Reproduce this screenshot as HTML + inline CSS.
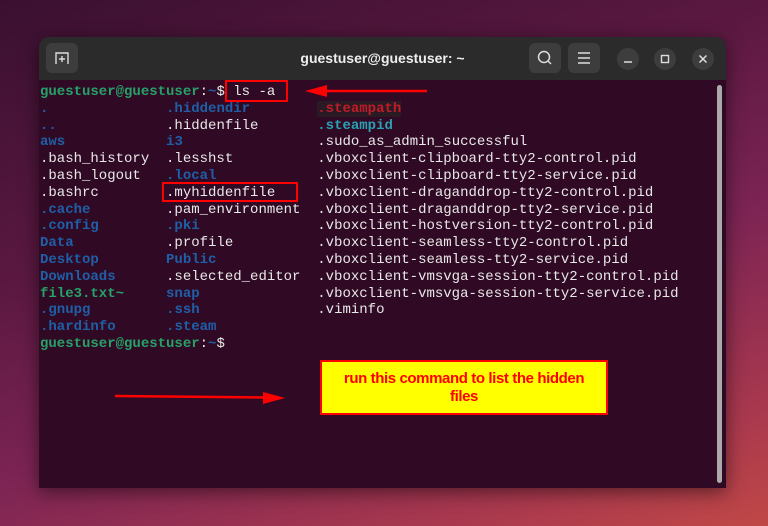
<!DOCTYPE html>
<html><head><meta charset="utf-8"><style>
*{margin:0;padding:0;box-sizing:border-box}
body{width:768px;height:526px;overflow:hidden;position:relative;
background:linear-gradient(160deg,#3a1030 0%,#5a1840 35%,#7c2454 60%,#a8384e 85%,#c04846 100%);font-family:"Liberation Sans",sans-serif}
.win{position:absolute;left:39px;top:37px;width:687px;height:451px;background:#300a24;border-radius:10px 10px 0 0;overflow:hidden;box-shadow:0 4px 18px rgba(0,0,0,.5)}
.hdr{height:43px;background:#2b2b2b;position:relative}
.title{position:absolute;left:0;right:0;top:13px;text-align:center;color:#eee;font-weight:bold;font-size:14px}
.btn{position:absolute;top:6px;width:32px;height:30px;background:#3d3d3d;border-radius:6px}
.circ{position:absolute;top:11px;width:22px;height:22px;background:#3d3d3d;border-radius:50%}
.term{position:absolute;left:1px;top:47px;font-family:"Liberation Mono",monospace;font-size:14px;line-height:16.8px;color:#e8e8e8;white-space:pre}
.g{color:#26a269;font-weight:bold}.b{color:#1f5fa8;font-weight:bold}.w{color:#e8e8e8}.c{color:#2aa1b3;font-weight:bold}.r{color:#c01c28;font-weight:bold;background:#2a1a24}
.sb{position:absolute;left:678px;top:48px;width:5px;height:398px;background:#aaa;border-radius:3px}
.box{position:absolute;border:2px solid #f00}
</style></head><body>
<div class="win">
<div class="hdr">
<div class="btn" style="left:7px"><svg width="32" height="30"><path d="M10 21V10h12v11" stroke="#ddd" stroke-width="1.4" fill="none"/><path d="M16 13v6M13 16h6" stroke="#ddd" stroke-width="1.4"/></svg></div>
<div class="title">guestuser@guestuser: ~</div>
<div class="btn" style="left:490px"><svg width="32" height="30"><circle cx="15" cy="14" r="5.5" stroke="#ddd" stroke-width="1.5" fill="none"/><path d="M19 18l3 3" stroke="#ddd" stroke-width="1.5"/></svg></div>
<div class="btn" style="left:529px"><svg width="32" height="30"><path d="M10 10h12M10 15h12M10 20h12" stroke="#ddd" stroke-width="1.4"/></svg></div>
<div class="circ" style="left:578px"><svg width="22" height="22"><path d="M7 14h8" stroke="#ddd" stroke-width="1.5"/></svg></div>
<div class="circ" style="left:615px"><svg width="22" height="22"><rect x="7.5" y="7.5" width="7" height="7" stroke="#ddd" stroke-width="1.4" fill="none"/></svg></div>
<div class="circ" style="left:653px"><svg width="22" height="22"><path d="M7.5 7.5l7 7M14.5 7.5l-7 7" stroke="#ddd" stroke-width="1.5"/></svg></div>
</div>
<div class="term"><span class="g">guestuser@guestuser</span>:<span class="b">~</span>$ ls -a
<span class="b">.</span>              <span class="b">.hiddendir</span>        <span class="r">.steampath</span>
<span class="b">..</span>             .hiddenfile       <span class="c">.steampid</span>
<span class="b">aws</span>            <span class="b">i3</span>                .sudo_as_admin_successful
.bash_history  .lesshst          .vboxclient-clipboard-tty2-control.pid
.bash_logout   <span class="b">.local</span>            .vboxclient-clipboard-tty2-service.pid
.bashrc        .myhiddenfile     .vboxclient-draganddrop-tty2-control.pid
<span class="b">.cache</span>         .pam_environment  .vboxclient-draganddrop-tty2-service.pid
<span class="b">.config</span>        <span class="b">.pki</span>              .vboxclient-hostversion-tty2-control.pid
<span class="b">Data</span>           .profile          .vboxclient-seamless-tty2-control.pid
<span class="b">Desktop</span>        <span class="b">Public</span>            .vboxclient-seamless-tty2-service.pid
<span class="b">Downloads</span>      .selected_editor  .vboxclient-vmsvga-session-tty2-control.pid
<span class="g">file3.txt~</span>     <span class="b">snap</span>              .vboxclient-vmsvga-session-tty2-service.pid
<span class="b">.gnupg</span>         <span class="b">.ssh</span>              .viminfo
<span class="b">.hardinfo</span>      <span class="b">.steam</span>
<span class="g">guestuser@guestuser</span>:<span class="b">~</span>$</div>
<div class="sb"></div>
</div>
<div class="box" style="left:225px;top:80px;width:63px;height:22px"></div>
<div class="box" style="left:162px;top:182px;width:136px;height:20px"></div>
<svg style="position:absolute;left:0;top:0" width="768" height="526">
<path d="M325 91H427" stroke="#f00" stroke-width="2.5"/><path d="M305 91l22-6v12z" fill="#f00"/>
<path d="M115 396l150 1.5" stroke="#f00" stroke-width="2.5"/><path d="M285 398l-22-6v12z" fill="#f00"/>
</svg>
<div style="position:absolute;left:320px;top:360px;width:288px;height:55px;background:#ff0;border:2px solid #f00;color:#f00;font-weight:bold;font-size:15px;text-align:center;padding-top:8px;line-height:18px;letter-spacing:-.4px">run this command to list the hidden<br>files</div>
</body></html>
